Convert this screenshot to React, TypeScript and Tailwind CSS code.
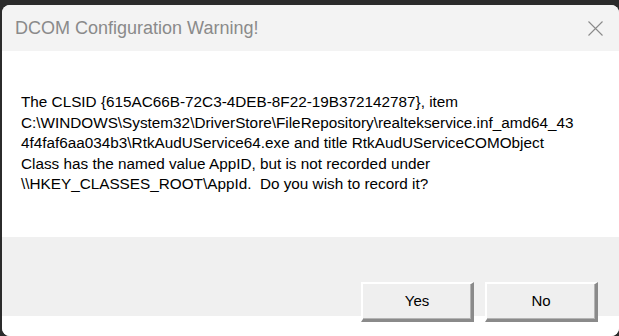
export default function App() {
  const lines = [
    'The CLSID {615AC66B-72C3-4DEB-8F22-19B372142787}, item',
    'C:\\WINDOWS\\System32\\DriverStore\\FileRepository\\realtekservice.inf_amd64_43',
    '4f4faf6aa034b3\\RtkAudUService64.exe and title RtkAudUServiceCOMObject',
    'Class has the named value AppID, but is not recorded under',
    '\\\\HKEY_CLASSES_ROOT\\AppId.  Do you wish to record it?',
  ]

  return (
    <div className="w-[619px] h-[336px] bg-[#2b2b2b] pt-[5px] pl-[2px] overflow-hidden font-['Liberation_Sans',sans-serif]">
      <div className="w-[617px] h-[331px] rounded-[8px] overflow-hidden bg-white flex flex-col">
        {/* title bar */}
        <div className="h-[46px] shrink-0 bg-[#f3f3f3] flex items-center justify-between pl-[13px] pr-[16px]">
          <span className="text-[18px] text-[#8a8a8a] leading-none">DCOM Configuration Warning!</span>
          <svg width="15" height="15" viewBox="0 0 15 15" className="text-[#8a8a8a]">
            <path d="M0.5 0.5 L14.5 14.5 M14.5 0.5 L0.5 14.5" stroke="currentColor" strokeWidth="1.1" fill="none" />
          </svg>
        </div>

        {/* message */}
        <div className="h-[186px] shrink-0 pt-[41px] pl-[19px] text-[15.3px] leading-[20.5px] text-black whitespace-pre">
          {lines.map((l) => (
            <div key={l}>{l}</div>
          ))}
        </div>

        {/* buttons */}
        <div className="flex-1 bg-[linear-gradient(to_bottom,#f0f0f0_79px,#ffffff_79px)] flex justify-end items-start gap-[11px] pt-[45px] pr-[21px]">
          <DlgButton label="Yes" />
          <DlgButton label="No" />
        </div>
      </div>
    </div>
  )
}

function DlgButton({ label }: { label: string }) {
  return (
    <button className="w-[113px] h-[40px] bg-[#efefef] text-[15px] text-black border-t-2 border-l-2 border-t-white border-l-white border-b-[3px] border-r-[3px] border-b-[#8a8a8a] border-r-[#8a8a8a] shadow-[inset_-1px_-1px_0_#b4b4b4] flex items-center justify-center">
      {label}
    </button>
  )
}
